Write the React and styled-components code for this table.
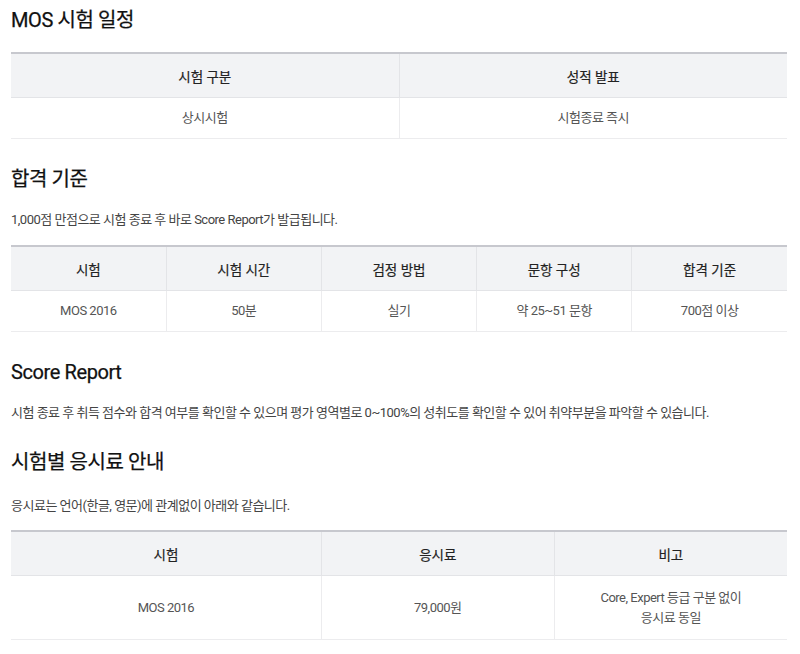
import React from "react";
import styled, { createGlobalStyle } from "styled-components";

const Global = createGlobalStyle`
  html, body { margin: 0; padding: 0; background: #fff; }
  body {
    font-family: Roboto, "Noto Sans CJK KR", "Noto Sans", sans-serif;
    color: #333;
  }
`;

const Page = styled.main`
  padding: 6px 13px 20px 11px;
`;

const Section = styled.section`
  margin-top: ${(p) => p.$mt || "0"};
`;

const Heading = styled.h2`
  margin: 0;
  font-size: 20px;
  line-height: 28px;
  font-weight: 400;
  color: #111;
  letter-spacing: -0.4px;
  -webkit-text-stroke: 0.25px #111;
`;

const Desc = styled.p`
  margin: ${(p) => p.$mt || "17px"} 0 0;
  font-size: 13px;
  line-height: 20px;
  color: #444;
  letter-spacing: -0.5px;
`;

const Table = styled.table`
  width: 100%;
  margin-top: ${(p) => p.$mt || "15px"};
  border-collapse: collapse;
  table-layout: fixed;
  border-top: 2px solid #c7c8ce;
`;

const Th = styled.th`
  height: 43px;
  padding: 0;
  background: #f2f3f5;
  font-size: 13.5px;
  font-weight: 400;
  color: #222;
  -webkit-text-stroke: 0.2px #222;
  text-align: center;
  border-bottom: 1px solid #e3e4e7;
  border-left: 1px solid #e3e4e7;
  &:first-child { border-left: none; }
`;

const Td = styled.td`
  height: ${(p) => p.$h || "40px"};
  padding: 0;
  font-size: 13px;
  line-height: 20px;
  color: #555;
  text-align: center;
  letter-spacing: -0.5px;
  border-bottom: 1px solid #ececee;
  border-left: 1px solid #ececee;
  &:first-child { border-left: none; }
`;

export default function App() {
  return (
    <>
      <Global />
      <Page>
        <Section>
          <Heading>MOS 시험 일정</Heading>
          <Table $mt="18px">
            <thead>
              <tr>
                <Th>시험 구분</Th>
                <Th>성적 발표</Th>
              </tr>
            </thead>
            <tbody>
              <tr>
                <Td>상시시험</Td>
                <Td>시험종료 즉시</Td>
              </tr>
            </tbody>
          </Table>
        </Section>

        <Section $mt="26px">
          <Heading>합격 기준</Heading>
          <Desc>1,000점 만점으로 시험 종료 후 바로 Score Report가 발급됩니다.</Desc>
          <Table>
            <thead>
              <tr>
                <Th>시험</Th>
                <Th>시험 시간</Th>
                <Th>검정 방법</Th>
                <Th>문항 구성</Th>
                <Th>합격 기준</Th>
              </tr>
            </thead>
            <tbody>
              <tr>
                <Td>MOS 2016</Td>
                <Td>50분</Td>
                <Td>실기</Td>
                <Td>약 25~51 문항</Td>
                <Td>700점 이상</Td>
              </tr>
            </tbody>
          </Table>
        </Section>

        <Section $mt="26px">
          <Heading>Score Report</Heading>
          <Desc>
            시험 종료 후 취득 점수와 합격 여부를 확인할 수 있으며 평가 영역별로 0~100%의 성취도를 확인할 수 있어 취약부분을 파악할 수 있습니다.
          </Desc>
        </Section>

        <Section $mt="25px">
          <Heading>시험별 응시료 안내</Heading>
          <Desc $mt="20px">응시료는 언어(한글, 영문)에 관계없이 아래와 같습니다.</Desc>
          <Table $mt="14px">
            <colgroup>
              <col style={{ width: "40%" }} />
              <col style={{ width: "30%" }} />
              <col style={{ width: "30%" }} />
            </colgroup>
            <thead>
              <tr>
                <Th>시험</Th>
                <Th>응시료</Th>
                <Th>비고</Th>
              </tr>
            </thead>
            <tbody>
              <tr>
                <Td $h="63px">MOS 2016</Td>
                <Td $h="63px">79,000원</Td>
                <Td $h="63px">
                  Core, Expert 등급 구분 없이
                  <br />
                  응시료 동일
                </Td>
              </tr>
            </tbody>
          </Table>
        </Section>
      </Page>
    </>
  );
}
